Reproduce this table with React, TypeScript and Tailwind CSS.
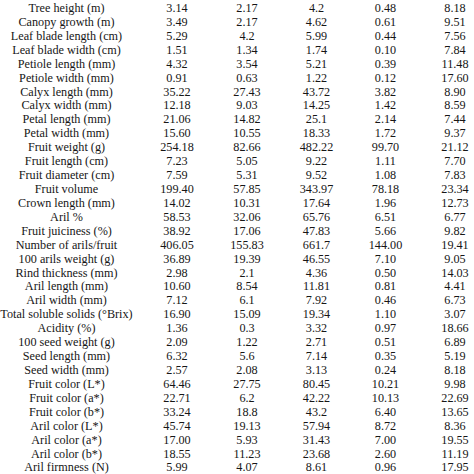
import React from 'react';

type Row = [string, string, string, string, string, string];

const rows: Row[] = [
  ['Tree height (m)', '3.14', '2.17', '4.2', '0.48', '8.18'],
  ['Canopy growth (m)', '3.49', '2.17', '4.62', '0.61', '9.51'],
  ['Leaf blade length (cm)', '5.29', '4.2', '5.99', '0.44', '7.56'],
  ['Leaf blade width (cm)', '1.51', '1.34', '1.74', '0.10', '7.84'],
  ['Petiole length (mm)', '4.32', '3.54', '5.21', '0.39', '11.48'],
  ['Petiole width (mm)', '0.91', '0.63', '1.22', '0.12', '17.60'],
  ['Calyx length (mm)', '35.22', '27.43', '43.72', '3.82', '8.90'],
  ['Calyx width (mm)', '12.18', '9.03', '14.25', '1.42', '8.59'],
  ['Petal length (mm)', '21.06', '14.82', '25.1', '2.14', '7.44'],
  ['Petal width (mm)', '15.60', '10.55', '18.33', '1.72', '9.37'],
  ['Fruit weight (g)', '254.18', '82.66', '482.22', '99.70', '21.12'],
  ['Fruit length (cm)', '7.23', '5.05', '9.22', '1.11', '7.70'],
  ['Fruit diameter (cm)', '7.59', '5.31', '9.52', '1.08', '7.83'],
  ['Fruit volume', '199.40', '57.85', '343.97', '78.18', '23.34'],
  ['Crown length (mm)', '14.02', '10.31', '17.64', '1.96', '12.73'],
  ['Aril %', '58.53', '32.06', '65.76', '6.51', '6.77'],
  ['Fruit juiciness (%)', '38.92', '17.06', '47.83', '5.66', '9.82'],
  ['Number of arils/fruit', '406.05', '155.83', '661.7', '144.00', '19.41'],
  ['100 arils weight (g)', '36.89', '19.39', '46.55', '7.10', '9.05'],
  ['Rind thickness (mm)', '2.98', '2.1', '4.36', '0.50', '14.03'],
  ['Aril length (mm)', '10.60', '8.54', '11.81', '0.81', '4.41'],
  ['Aril width (mm)', '7.12', '6.1', '7.92', '0.46', '6.73'],
  ['Total soluble solids (°Brix)', '16.90', '15.09', '19.34', '1.10', '3.07'],
  ['Acidity (%)', '1.36', '0.3', '3.32', '0.97', '18.66'],
  ['100 seed weight (g)', '2.09', '1.22', '2.71', '0.51', '6.89'],
  ['Seed length (mm)', '6.32', '5.6', '7.14', '0.35', '5.19'],
  ['Seed width (mm)', '2.57', '2.08', '3.13', '0.24', '8.18'],
  ['Fruit color (L*)', '64.46', '27.75', '80.45', '10.21', '9.98'],
  ['Fruit color (a*)', '22.71', '6.2', '42.22', '10.13', '22.69'],
  ['Fruit color (b*)', '33.24', '18.8', '43.2', '6.40', '13.65'],
  ['Aril color (L*)', '45.74', '19.13', '57.94', '8.72', '8.36'],
  ['Aril color (a*)', '17.00', '5.93', '31.43', '7.00', '19.55'],
  ['Aril color (b*)', '18.55', '11.23', '23.68', '2.60', '11.19'],
  ['Aril firmness (N)', '5.99', '4.07', '8.61', '0.96', '17.95'],
];

export default function App() {
  return (
    <div className="w-[474px] h-[474px] overflow-hidden bg-white text-[#161616] font-['Liberation_Serif','Times_New_Roman',serif] text-[12.2px]">
      <div className="flex flex-col pt-[2px]">
        {rows.map((r) => (
          <div
            key={r[0]}
            className="grid grid-cols-[142px_70px_70px_69px_69px_70px] h-[13.93px] leading-[13.93px] text-center whitespace-nowrap"
          >
            <span className="pr-[9px]">{r[0]}</span>
            <span>{r[1]}</span>
            <span>{r[2]}</span>
            <span>{r[3]}</span>
            <span>{r[4]}</span>
            <span>{r[5]}</span>
          </div>
        ))}
      </div>
    </div>
  );
}
